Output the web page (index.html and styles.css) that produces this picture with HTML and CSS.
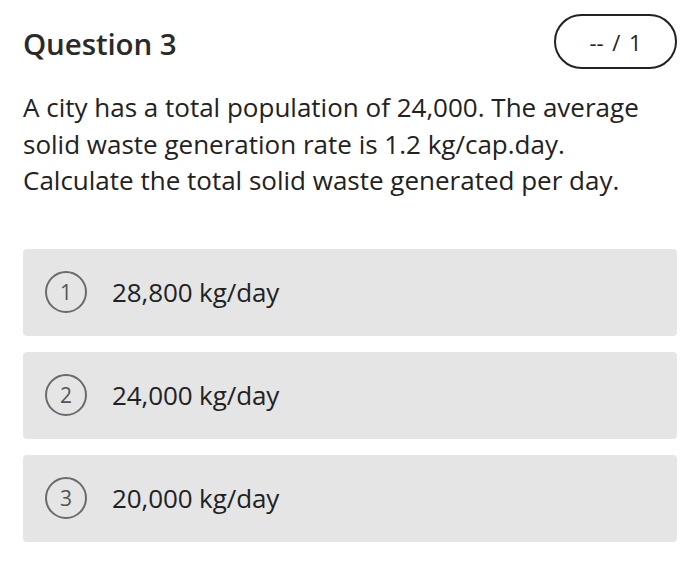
FILE: index.html
```html
<!DOCTYPE html>
<html>
<head>
<meta charset="utf-8">
<link rel="stylesheet" href="styles.css">
</head>
<body>
<div class="page">
  <div class="header">
    <h1 class="title">Question 3</h1>
    <div class="score">-- / 1</div>
  </div>
  <p class="question">A city has a total population of 24,000. The average solid waste generation rate is 1.2 kg/cap.day. Calculate the total solid waste generated per day.</p>
  <div class="options">
    <div class="option"><span class="num">1</span><span class="label">28,800 kg/day</span></div>
    <div class="option"><span class="num">2</span><span class="label">24,000 kg/day</span></div>
    <div class="option"><span class="num">3</span><span class="label">20,000 kg/day</span></div>
  </div>
</div>
</body>
</html>
```
FILE: styles.css
```css
html, body {
  margin: 0;
  padding: 0;
  background: #ffffff;
}
body {
  font-family: "Open Sans", "Noto Sans", sans-serif;
  color: #222222;
}
.page {
  padding: 14px 23px 0 23px;
}
.header {
  display: flex;
  justify-content: space-between;
  align-items: flex-start;
}
.title {
  margin: 10px 0 0 0;
  font-size: 29.5px;
  font-weight: 600;
  line-height: 40px;
  letter-spacing: -0.1px;
  color: #2a2a2a;
}
.score {
  box-sizing: border-box;
  width: 123px;
  height: 55px;
  border: 2px solid #222222;
  border-radius: 28px;
  display: flex;
  align-items: center;
  justify-content: center;
  font-size: 22px;
  word-spacing: 3px;
  color: #222222;
}
.question {
  margin: 20px 0 0 0;
  max-width: 630px;
  font-size: 26px;
  line-height: 36.5px;
  color: #222222;
}
.options {
  margin-top: 50px;
  display: flex;
  flex-direction: column;
  gap: 16px;
}
.option {
  height: 87px;
  background: #e5e5e5;
  border-radius: 4px;
  display: flex;
  align-items: center;
  padding-left: 22px;
  gap: 25px;
}
.num {
  box-sizing: border-box;
  width: 42px;
  height: 42px;
  border: 2px solid #6b6b6b;
  border-radius: 50%;
  display: flex;
  align-items: center;
  justify-content: center;
  font-size: 21px;
  color: #555555;
}
.label {
  font-size: 26px;
  letter-spacing: -0.1px;
  color: #222222;
}
```
